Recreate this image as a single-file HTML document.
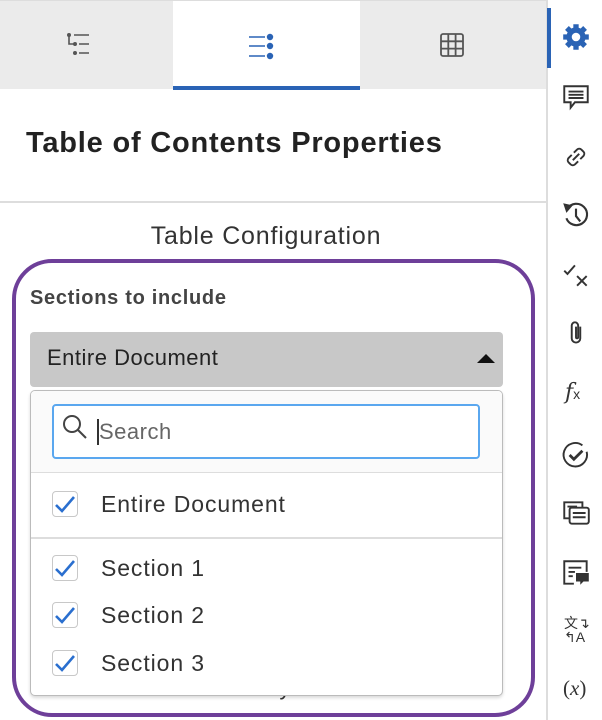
<!DOCTYPE html>
<html><head><style>
*{box-sizing:border-box;margin:0;padding:0}
body{width:602px;height:720px;overflow:hidden;background:#fff;font-family:"Liberation Sans",sans-serif;position:relative;color:#222}
.abs{position:absolute}
.tab{position:absolute;top:1px;height:88px;background:#ebebeb}
.cb{position:absolute;left:52px;width:26px;height:26px;border:1.5px solid #c8c8c8;border-radius:4px;background:#fff}
.cb svg{position:absolute;left:1px;top:2px}
.it{position:absolute;left:101px;font-size:23px;color:#333;letter-spacing:.9px}
.ic{position:absolute;left:560px;width:32px;height:32px}
</style></head><body>
<div class="abs" style="left:0;top:0;width:546px;height:1px;background:#ddd"></div>
<div class="tab" style="left:0;width:173px"></div>
<div class="tab" style="left:173px;width:187px;background:#fff"></div>
<div class="tab" style="left:360px;width:186px"></div>
<div class="abs" style="left:173px;top:86px;width:187px;height:4px;background:#2a63b5"></div>
<svg class="abs" style="left:64px;top:32px" width="30" height="26" viewBox="0 0 30 26"><g fill="#555" stroke="#555" stroke-width="1.6"><circle cx="5" cy="3" r="2" stroke="none"/><circle cx="11" cy="12" r="2" stroke="none"/><circle cx="11" cy="21" r="2" stroke="none"/><path d="M5 3v9h6M10 3h15M15 12h10M15 21h10" fill="none"/></g></svg>
<svg class="abs" style="left:246px;top:32px" width="30" height="30" viewBox="0 0 30 30"><g fill="#2a63b5" stroke="#2a63b5" stroke-width="1.6"><path d="M3 5h16M3 14h16M3 24h16" fill="none"/><circle cx="24" cy="5" r="3.2" stroke="none"/><circle cx="24" cy="14" r="3.2" stroke="none"/><circle cx="24" cy="24" r="3.2" stroke="none"/></g></svg>
<svg class="abs" style="left:439px;top:32px" width="28" height="28" viewBox="0 0 28 28"><g fill="none" stroke="#555" stroke-width="1.8"><rect x="2" y="2" width="22" height="22" rx="2"/><path d="M9.3 2v22M16.6 2v22M2 9.3h22M2 16.6h22"/></g></svg>
<div class="abs" style="left:26px;top:127px;font-size:29px;font-weight:bold;color:#222;letter-spacing:.8px">Table of Contents Properties</div>
<div class="abs" style="left:0;top:201px;width:546px;height:2px;background:#ddd"></div>
<div class="abs" style="left:0;top:222px;width:532px;text-align:center;font-size:25px;color:#333;letter-spacing:.8px">Table Configuration</div>
<div class="abs" style="left:12px;top:259px;width:523px;height:458px;border:4px solid #6e3f99;border-radius:40px"></div>
<div class="abs" style="left:30px;top:287px;font-size:20px;font-weight:bold;color:#444;letter-spacing:.7px">Sections to include</div>
<div class="abs" style="left:30px;top:332px;width:473px;height:55px;background:#c8c8c8;border-radius:4px"></div>
<div class="abs" style="left:47px;top:345px;font-size:22px;color:#222;letter-spacing:.5px">Entire Document</div>
<svg class="abs" style="left:477px;top:353px" width="18" height="10"><path d="M0 10L9 1L18 10Z" fill="#111"/></svg>
<div class="abs" style="left:200px;top:675px;font-size:22px;color:#333">Table Styles</div>
<div class="abs" style="left:30px;top:390px;width:473px;height:306px;background:#fff;border:1.5px solid #bbb;border-radius:5px;box-shadow:0 2px 3px rgba(0,0,0,.15);overflow:hidden">
 <div class="abs" style="left:0;top:0;width:471px;height:82px;background:#fafafa;border-bottom:1.5px solid #ddd"></div>
 <div class="abs" style="left:21px;top:13px;width:428px;height:55px;border:2px solid #5aa7ef;border-radius:4px;background:#fff"></div>
 <div class="abs" style="left:0;top:146px;width:471px;height:1.5px;background:#ddd"></div>
</div>
<svg class="abs" style="left:61px;top:413px" width="28" height="28" viewBox="0 0 28 28"><g fill="none" stroke="#444" stroke-width="2"><circle cx="11" cy="11" r="8"/><path d="M17 17l8 8"/></g></svg>
<div class="abs" style="left:97px;top:419px;width:1.5px;height:26px;background:#333"></div>
<div class="abs" style="left:99px;top:419px;font-size:22px;color:#666;letter-spacing:.5px">Search</div>
<div class="cb" style="top:491px"><svg width="22" height="20"><path d="M2 11l6 6L20 3" fill="none" stroke="#2a6fcf" stroke-width="2.6"/></svg></div>
<div class="it" style="top:491px">Entire Document</div>
<div class="cb" style="top:555px"><svg width="22" height="20"><path d="M2 11l6 6L20 3" fill="none" stroke="#2a6fcf" stroke-width="2.6"/></svg></div>
<div class="it" style="top:555px">Section 1</div>
<div class="cb" style="top:602px"><svg width="22" height="20"><path d="M2 11l6 6L20 3" fill="none" stroke="#2a6fcf" stroke-width="2.6"/></svg></div>
<div class="it" style="top:602px">Section 2</div>
<div class="cb" style="top:650px"><svg width="22" height="20"><path d="M2 11l6 6L20 3" fill="none" stroke="#2a6fcf" stroke-width="2.6"/></svg></div>
<div class="it" style="top:650px">Section 3</div>
<!-- sidebar -->
<div class="abs" style="left:546px;top:0;width:2px;height:720px;background:#ddd"></div>
<div class="abs" style="left:547px;top:8px;width:4px;height:60px;background:#2a63b5"></div>
<svg class="ic" style="top:21px" viewBox="0 0 30 30"><g fill="#2a63b5"><circle cx="15" cy="15" r="9"/><g stroke="#2a63b5" stroke-width="5"><path d="M15 3v24M3 15h24M6.5 6.5l17 17M23.5 6.5l-17 17"/></g></g><circle cx="15" cy="15" r="4" fill="#fff"/></svg>
<svg class="ic" style="top:82px" viewBox="0 0 30 30"><g fill="none" stroke="#333" stroke-width="1.8"><path d="M4 4h22v15H14l-4 5v-5H4z"/><path d="M8 9h14M8 12h14M8 15h14"/></g></svg>
<svg class="ic" style="top:141px" viewBox="0 0 30 30"><g fill="none" stroke="#333" stroke-width="1.8"><path d="M13 11l3-3a3 3 0 014 0l2 2a3 3 0 010 4l-3 3M17 19l-3 3a3 3 0 01-4 0l-2-2a3 3 0 010-4l3-3M12 18l6-6"/></g></svg>
<svg class="ic" style="top:199px" viewBox="0 0 30 30"><g fill="none" stroke="#333" stroke-width="2"><path d="M7 9a10 10 0 11-1 9"/><path d="M15 9v7l4 5"/></g><path d="M3 4l9 2-6 7z" fill="#333"/></svg>
<svg class="ic" style="top:259px" viewBox="0 0 30 30"><g fill="none" stroke="#333" stroke-width="1.8"><path d="M4 11l3 3 7-8M16 16l9 9M25 16l-9 9"/></g></svg>
<svg class="ic" style="top:317px" viewBox="0 0 30 30"><path d="M19 9v11a4 4 0 01-8 0V8a3 3 0 016 0v11a1 1 0 01-2 0V9" fill="none" stroke="#333" stroke-width="1.8"/></svg>
<div class="abs" style="left:565px;top:380px;font-family:'DejaVu Serif',serif;font-style:italic;font-size:22px;color:#333">f<span style="font-size:14px;font-style:normal;font-family:'Liberation Sans'">x</span></div>
<svg class="ic" style="top:439px" viewBox="0 0 30 30"><g fill="none" stroke="#333" stroke-width="1.8"><path d="M25 12a11 11 0 11-4-6"/><path d="M9 15l4 4 8-8" stroke-width="2.6"/></g></svg>
<svg class="ic" style="top:497px" viewBox="0 0 30 30"><g fill="none" stroke="#333" stroke-width="1.8"><path d="M9 20H4V5h17v5"/><rect x="9" y="10" width="18" height="15" rx="2"/><path d="M7 9h9M12 15h12M12 19h12"/></g></svg>
<svg class="ic" style="top:557px" viewBox="0 0 30 30"><g fill="none" stroke="#333" stroke-width="1.8"><path d="M13 25H4V4h21v10"/><path d="M8 10h12M8 14h6M8 18h4"/></g><path d="M15 15h12v8h-5l-3 3v-3h-4z" fill="#333"/></svg>
<div class="abs" style="left:564px;top:616px;font-size:14px;line-height:14px;color:#333;font-family:'Noto Sans CJK SC',sans-serif">文<span style="font-family:'Liberation Sans'">↴</span><br><span style="font-family:'Liberation Sans'">↰A</span></div>
<div class="abs" style="left:563px;top:676px;font-size:21px;color:#333;font-family:'Liberation Serif',serif">(<i>x</i>)</div>
</body></html>
